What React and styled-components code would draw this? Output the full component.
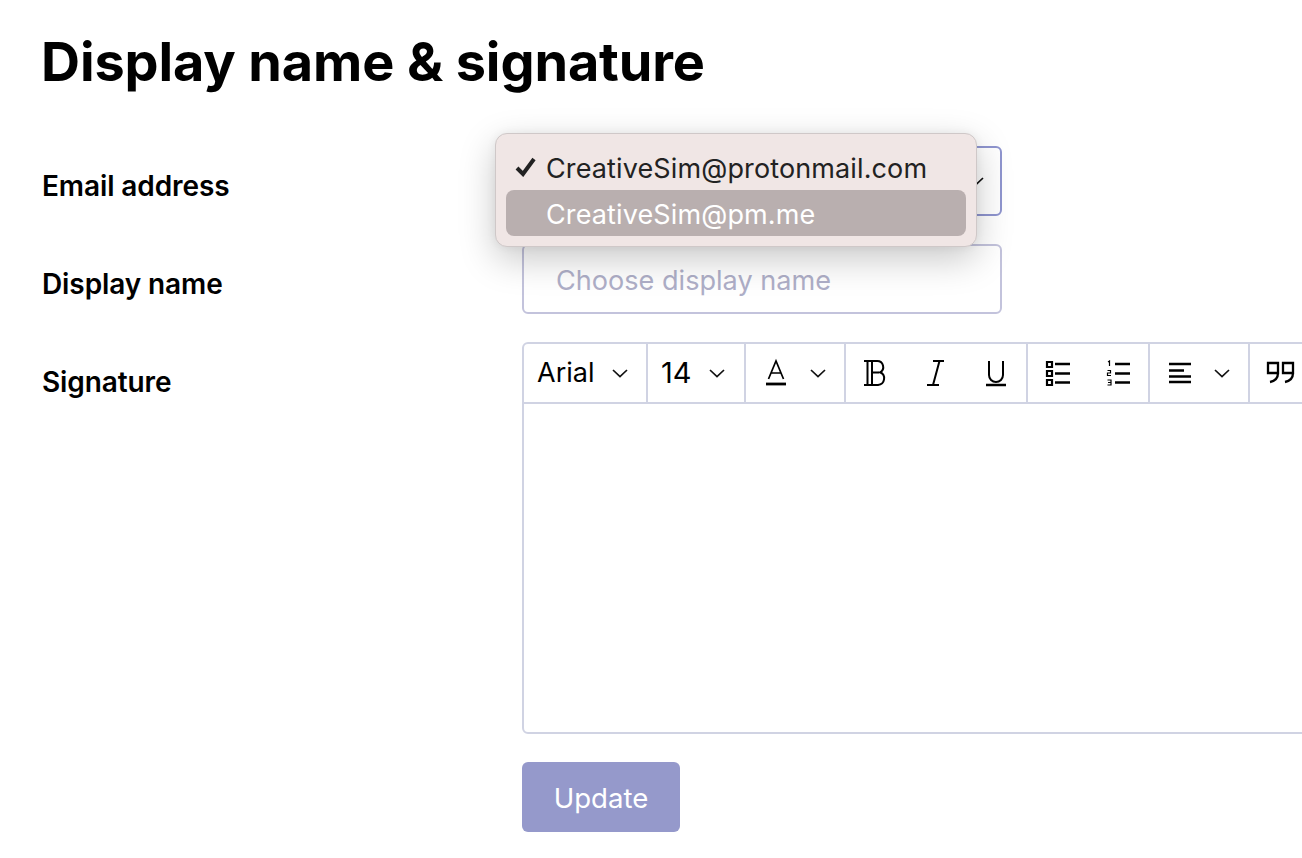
import React from "react";
import styled, { createGlobalStyle } from "styled-components";

const Global = createGlobalStyle`
  html, body { margin: 0; padding: 0; background: #fff; overflow: hidden; height: 858px; }
  body { font-family: Inter, "Liberation Sans", sans-serif; color: #000; }
`;
const Page = styled.div`
  width: 1302px; height: 858px; overflow: hidden; box-sizing: border-box;
  padding: 27px 0 0 41px;
`;
const Title = styled.h1`
  margin: 0 0 49px; font-size: 54px; line-height: 70px; font-weight: 700; letter-spacing: -0.12px; white-space: nowrap;
`;
const Row = styled.div`
  display: grid; grid-template-columns: 481px auto; margin-bottom: 28px; width: 1400px;
`;
const Label = styled.div`
  font-size: 28px; line-height: 40px; font-weight: 600; padding: 20px 0 0 1px; white-space: nowrap; letter-spacing: -0.1px;
`;
const SelectWrap = styled.div`position: relative; width: 480px;`;
const SelectBox = styled.div`
  box-sizing: border-box; width: 480px; height: 70px; border: 2px solid #8f95cf; border-radius: 6px;
  display: flex; align-items: center; justify-content: flex-end; padding-right: 16px;
`;
const Menu = styled.div`
  position: absolute; left: -27px; top: -13px; width: 482px; height: 114px; box-sizing: border-box;
  padding: 10px 10px; background: #f0e6e5; border: 1px solid #cfc8c8; border-radius: 12px;
  box-shadow: 0 12px 36px rgba(0,0,0,.22), 0 0 10px rgba(0,0,0,.06);
`;
const MenuItem = styled.div`
  box-sizing: border-box; height: 46px; border-radius: 8px; display: flex; align-items: center; padding: 2px 0 0 40px; position: relative;
  font-size: 27px; font-weight: 400; white-space: nowrap; letter-spacing: .12px;
  color: ${p => p.$active ? "#fff" : "#222"}; background: ${p => p.$active ? "#b9afaf" : "transparent"};
`;
const Check = styled.svg`position: absolute; left: 9px; top: 13px;`;
const Input = styled.div`
  box-sizing: border-box; width: 480px; height: 70px; border: 2px solid #c3c3dc; border-radius: 6px;
  display: flex; align-items: center; padding: 2px 0 0 32px; font-size: 27.1px; color: #afafc8; white-space: nowrap;
`;
const Editor = styled.div`
  box-sizing: border-box; width: 900px; height: 392px; border: 2px solid #d0d3e3; border-radius: 6px 0 0 6px;
`;
const Toolbar = styled.div`
  display: flex; box-sizing: border-box; height: 60px; border-bottom: 2px solid #d0d3e3;
`;
const Group = styled.div`
  box-sizing: border-box; width: ${p => p.$w}px; flex: none; display: flex; align-items: center;
  padding-left: ${p => p.$pl || 0}px; gap: ${p => p.$gap || 0}px; border-right: 2px solid #d0d3e3;
  &:last-child { border-right: 0; }
`;
const ToolText = styled.span`font-size: ${p => p.$size || 27}px; font-weight: 400; line-height: 1; position: relative; top: -1px;`;
const Update = styled.button`
  display: block; width: 158px; height: 70px; margin-left: 481px; border: 0; border-radius: 6px;
  background: #9599cb; color: #fff; font: 400 27.6px Inter, sans-serif; padding: 2px 0 0;
`;

const Icon = ({ w = 28, h = 28, children, ...p }) => (
  <svg width={w} height={h} viewBox={`0 0 ${w} ${h}`} fill="none" stroke="#000" strokeWidth="2" {...p}>{children}</svg>
);
const Chev = ({ ...p }) => (
  <svg width="16" height="9" viewBox="0 0 16 9" fill="none" stroke="#111" strokeWidth="1.7" {...p}>
    <path d="M1 1l7 6.500L15 1" />
  </svg>
);

export default function App() {
  return (
    <Page>
      <Global />
      <Title>Display name &amp; signature</Title>
      <Row>
        <Label>Email address</Label>
        <SelectWrap>
          <SelectBox><Chev /></SelectBox>
          <Menu>
            <MenuItem>
              <Check width="22" height="20" viewBox="0 0 22 20" fill="none" stroke="#222" strokeWidth="4">
                <path d="M2 11l6 6L19 2" />
              </Check>
              CreativeSim@protonmail.com
            </MenuItem>
            <MenuItem $active>CreativeSim@pm.me</MenuItem>
          </Menu>
        </SelectWrap>
      </Row>
      <Row>
        <Label>Display name</Label>
        <Input>Choose display name</Input>
      </Row>
      <Row>
        <Label>Signature</Label>
        <Editor>
          <Toolbar>
            <Group $w={124} $pl={13} $gap={18}><ToolText>Arial</ToolText><Chev /></Group>
            <Group $w={98} $pl={13} $gap={17}><ToolText $size={29}>14</ToolText><Chev /></Group>
            <Group $w={100} $pl={19} $gap={23}>
              <Icon w={22} h={30}>
                <path d="M3.500 21L11 3l7.500 18M6 15h10" strokeWidth="1.700" />
                <path d="M1 26h20" strokeWidth="2.800" />
              </Icon>
              <Chev />
            </Group>
            <Group $w={182} $pl={17} $gap={36}>
              <Icon w={25} h={28}>
                <path d="M1 2h13a6 6 0 0 1 3 11.300A6.600 6.600 0 0 1 15 26H1M4.500 2v24M9 2v24M9 13.500h7" strokeWidth="2" />
              </Icon>
              <Icon w={24} h={28}>
                <path d="M9 2h11M3 26h12M15.500 2L9 26" strokeWidth="2" />
              </Icon>
              <Icon w={24} h={28}>
                <path d="M5 2v14a7 7 0 0 0 14 0V2" strokeWidth="2" />
                <path d="M2 26h20" strokeWidth="2.500" />
              </Icon>
            </Group>
            <Group $w={122} $pl={17} $gap={35}>
              <Icon w={26} h={26}>
                <path d="M2 2h5v5H2zM2 11h5v5H2zM2 20h5v5H2z" strokeWidth="2.200" />
                <path d="M10 4h15M10 13.500h15M10 22.500h15" strokeWidth="2.400" />
              </Icon>
              <Icon w={26} h={26}>
                <path d="M9 4h15M9 13.500h15M9 22.500h15" strokeWidth="2.400" />
                <path d="M2 2l1.500-1v5M1.500 10.500h3v2.500h-3v2.500h3.500M1.500 20h3.500v5h-3.500M2 22.500h3" strokeWidth="1.200" />
              </Icon>
            </Group>
            <Group $w={100} $pl={18} $gap={22}>
              <Icon w={24} h={24}>
                <path d="M1 3h22M1 9.500h15M1 15.500h22M1 21h22" strokeWidth="2.400" />
              </Icon>
              <Chev />
            </Group>
            <Group $w={100} $pl={15}>
              <Icon w={32} h={26}>
                <path d="M3 3h10v10H3zM13 3v10c0 5-3 8-8 9M18 3h10v10H18zM28 3v10c0 5-3 8-8 9" strokeWidth="2.300" />
              </Icon>
            </Group>
          </Toolbar>
        </Editor>
      </Row>
      <Update>Update</Update>
    </Page>
  );
}
